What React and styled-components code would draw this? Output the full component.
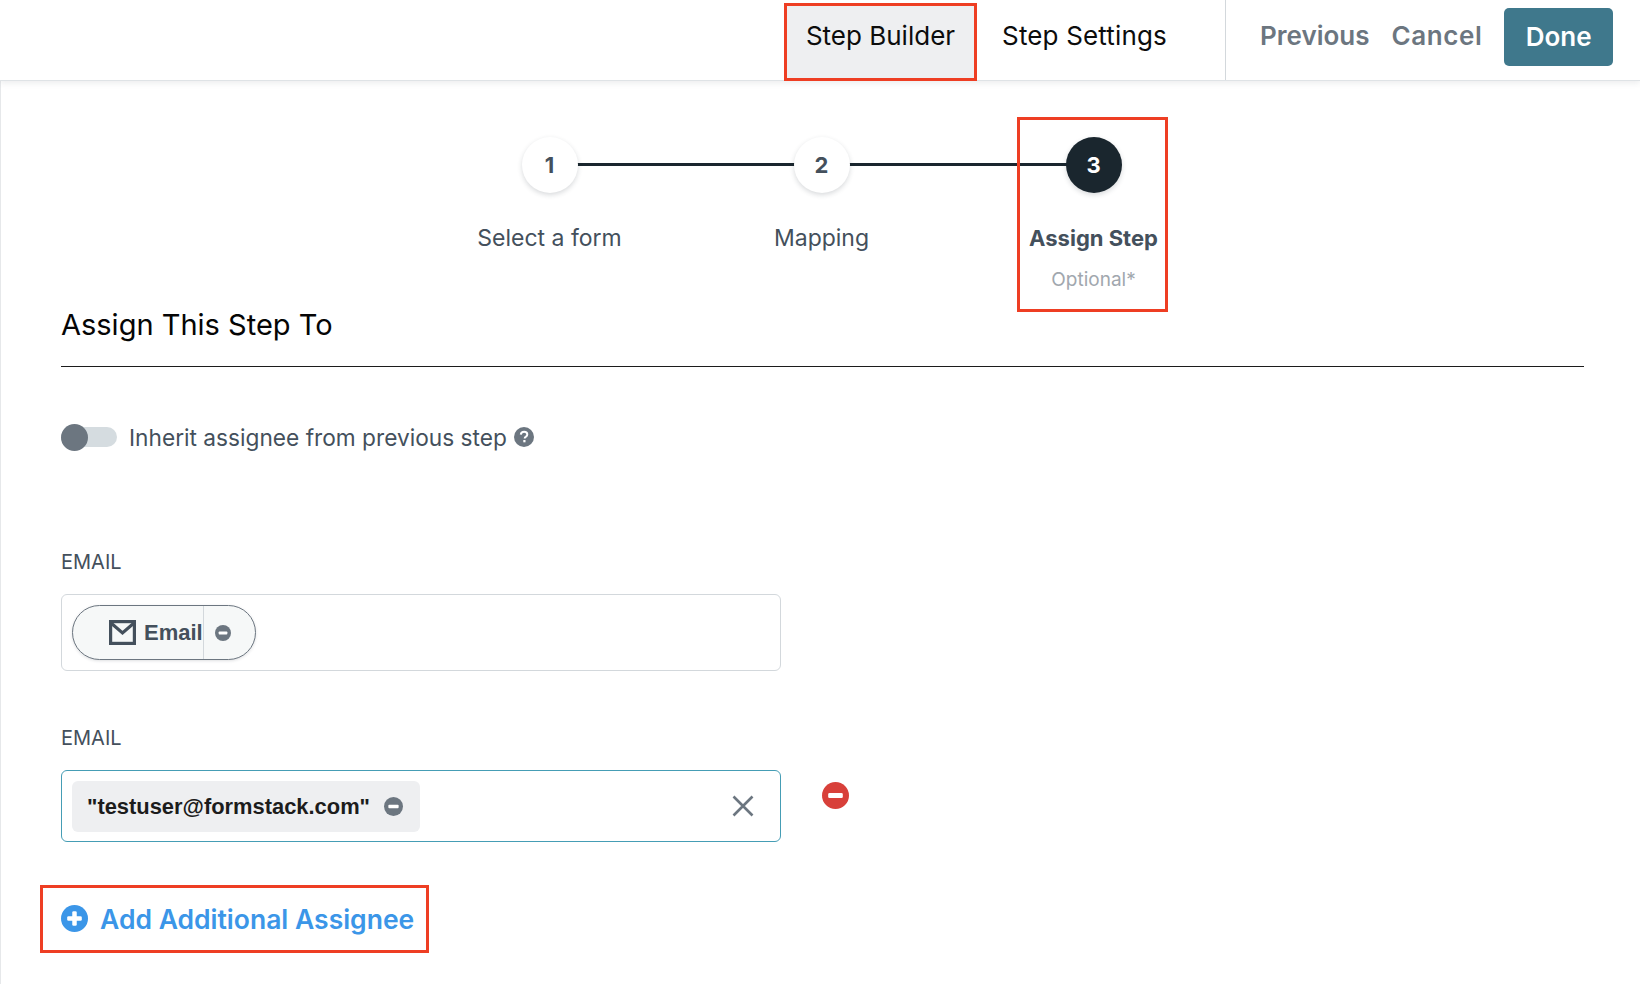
import styled, { createGlobalStyle } from "styled-components";

const GlobalStyle = createGlobalStyle`
  html, body {
    margin: 0;
    padding: 0;
    background: #fff;
  }
  body {
    font-family: "Inter", "Noto Sans", sans-serif;
    color: #44505c;
  }
  * {
    box-sizing: border-box;
  }
`;

const Page = styled.div`
  width: 1640px;
  height: 984px;
  overflow: hidden;
  display: flex;
  flex-direction: column;
`;
const Header = styled.header`
  height: 81px;
  flex: none;
  display: flex;
  justify-content: flex-end;
  align-items: stretch;
  padding-top: 3px;
  border-bottom: 1px solid #dfe3e6;
  box-shadow: 0 2px 6px rgba(60, 70, 80, 0.1);
  position: relative;
`;
const Tab = styled.div`
  height: 78px;
  display: flex;
  align-items: center;
  justify-content: center;
  padding-bottom: 14px;
  width: ${(p) => p.$width}px;
  font-size: 26px;
  letter-spacing: ${(p) => p.$spacing || 0}px;
  color: #0c0c0c;
  background: ${(p) => (p.$active ? "#eeeff1" : "transparent")};
  border: ${(p) => (p.$active ? "3px solid #ee3e23" : "none")};
`;
const Actions = styled.div`
  width: 415px;
  margin-top: -3px;
  margin-left: 33px;
  padding: 5px 27px 0 34px;
  border-left: 1px solid #d3d8dc;
  display: flex;
  align-items: flex-start;
`;
const TextAction = styled.div`
  height: 60px;
  display: flex;
  align-items: center;
  font-size: 26px;
  font-weight: 600;
  letter-spacing: ${(p) => p.$spacing || 0}px;
  color: #6c7680;
  margin-right: 22px;
`;
const DoneButton = styled.button`
  width: 109px;
  height: 58px;
  margin-top: 3px;
  margin-left: auto;
  padding-bottom: 3px;
  border: none;
  border-radius: 5px;
  background: #3f788c;
  color: #fff;
  font-family: inherit;
  font-size: 26px;
  font-weight: 600;
`;
const Main = styled.main`
  flex: 1;
  border-left: 1px solid #e6e8ea;
  padding: 36px 56px 0 60px;
`;
const Stepper = styled.div`
  display: flex;
  justify-content: center;
  margin-right: 2px;
  height: 195px;
`;
const Step = styled.div`
  position: relative;
  width: 272px;
  height: 195px;
  display: flex;
  flex-direction: column;
  align-items: center;
  padding-top: 20px;
`;
const Connector = styled.div`
  position: absolute;
  top: 46px;
  left: 136px;
  width: 272px;
  height: 3px;
  background: #1a262e;
`;
const Circle = styled.div`
  position: relative;
  width: 56px;
  height: 56px;
  border-radius: 50%;
  display: flex;
  align-items: center;
  justify-content: center;
  font-size: 22px;
  font-weight: 700;
  color: ${(p) => (p.$active ? "#fff" : "#44505c")};
  background: ${(p) => (p.$active ? "#1a262e" : "#fff")};
  box-shadow: 0 2px 5px rgba(40, 50, 60, 0.18);
`;
const StepLabel = styled.div`
  margin-top: 30px;
  height: 30px;
  line-height: 30px;
  font-size: ${(p) => (p.$active ? 22 : 23)}px;
  font-weight: ${(p) => (p.$active ? 700 : 400)};
  color: #44505c;
  white-space: nowrap;
`;
const StepNote = styled.div`
  margin-top: 15px;
  font-size: 19px;
  line-height: 24px;
  color: #a1a7ae;
`;
const Callout = styled.div`
  position: absolute;
  border: 3px solid #ee3e23;
  pointer-events: none;
  left: ${(p) => p.$left}px;
  top: ${(p) => p.$top}px;
  width: ${(p) => p.$width}px;
  height: ${(p) => p.$height}px;
`;
const SectionTitle = styled.h2`
  margin: 0;
  height: 55px;
  line-height: 26px;
  font-size: 29px;
  font-weight: 400;
  color: #050505;
  border-bottom: 1px solid #1c1c1c;
`;
const ToggleRow = styled.div`
  margin-top: 55px;
  height: 30px;
  display: flex;
  align-items: center;
`;
const Toggle = styled.div`
  position: relative;
  width: 56px;
  height: 20px;
  border-radius: 10px;
  background: #d5dce0;
`;
const Thumb = styled.div`
  position: absolute;
  left: 0;
  top: -3.5px;
  width: 27px;
  height: 27px;
  border-radius: 50%;
  background: #6c7680;
`;
const ToggleLabel = styled.span`
  margin-left: 12px;
  margin-right: 7px;
  font-size: 22.7px;
  color: #44505c;
`;
const FieldLabel = styled.div`
  margin-top: ${(p) => p.$top}px;
  height: 26px;
  line-height: 26px;
  font-size: 20px;
  color: #44505c;
`;
const FieldRow = styled.div`
  display: flex;
  align-items: flex-start;
  margin-top: ${(p) => p.$top}px;
`;
const Field = styled.div`
  width: 720px;
  height: ${(p) => p.$height}px;
  display: flex;
  align-items: flex-start;
  justify-content: space-between;
  padding: 10px 25px 0 10px;
  border: 1px solid ${(p) => (p.$focus ? "#459db5" : "#d3d8dc")};
  border-radius: 6px;
  background: #fff;
`;
const PillChip = styled.div`
  width: 184px;
  height: 55px;
  display: flex;
  align-items: center;
  padding-left: 36px;
  border: 1px solid #6c7680;
  border-radius: 28px;
  background: #f6f8f8;
  box-shadow: 0 1px 3px rgba(40, 50, 60, 0.15);
`;
const PillText = styled.span`
  margin-left: 8px;
  font-family: "Liberation Sans", Arial, sans-serif;
  font-size: 22px;
  font-weight: 700;
  color: #44505c;
  width: 59px;
`;
const PillAction = styled.div`
  height: 100%;
  display: flex;
  align-items: center;
  padding-left: 11px;
  border-left: 1px solid #d3d8dc;
`;
const TagChip = styled.div`
  height: 51px;
  display: flex;
  align-items: center;
  padding: 0 17px 0 15px;
  border-radius: 6px;
  background: #eeeff1;
`;
const TagText = styled.span`
  margin-right: 14px;
  font-family: "Liberation Sans", Arial, sans-serif;
  font-size: 21.9px;
  font-weight: 700;
  color: #1c1c1c;
`;
const ClearButton = styled.div`
  margin-top: 13px;
  height: 24px;
  display: flex;
`;
const RemoveButton = styled.div`
  margin-left: 41px;
  margin-top: 12px;
  height: 27px;
  display: flex;
`;
const AddRow = styled.div`
  position: relative;
  margin-top: 63px;
  height: 27px;
  display: flex;
  align-items: center;
  color: #3b96e8;
  font-size: 26.5px;
  font-weight: 600;
`;
const AddText = styled.span`
  margin-left: 12px;
`;

const MinusCircle = ({ size, color }) => (
  <svg width={size} height={size} viewBox="0 0 24 24">
    <circle cx="12" cy="12" r="12" fill={color} />
    <rect x="5.5" y="9.8" width="13" height="4.4" rx="1.2" fill="#fff" />
  </svg>
);

const PlusCircle = () => (
  <svg width="27" height="27" viewBox="0 0 24 24">
    <circle cx="12" cy="12" r="12" fill="#3b96e8" />
    <rect x="5.5" y="10" width="13" height="4" rx="1.2" fill="#fff" />
    <rect x="10" y="5.5" width="4" height="13" rx="1.2" fill="#fff" />
  </svg>
);

const HelpIcon = () => (
  <svg width="20" height="20" viewBox="0 0 20 20">
    <circle cx="10" cy="10" r="10" fill="#6c7680" />
    <path
      d="M6.8 7.6c.2-1.8 1.5-2.8 3.3-2.8 1.9 0 3.2 1.1 3.2 2.6 0 1.2-.7 1.9-1.6 2.5-.8.5-1 .8-1 1.6"
      fill="none"
      stroke="#fff"
      strokeWidth="2"
    />
    <rect x="9.3" y="13" width="2.2" height="2.3" fill="#fff" />
  </svg>
);

const MailIcon = () => (
  <svg width="27" height="25" viewBox="0 0 27 25">
    <rect x="1.6" y="1.6" width="23.8" height="21.8" fill="none" stroke="#44505c" strokeWidth="3.2" />
    <path d="M2 3l11.5 10L25 3" fill="none" stroke="#44505c" strokeWidth="3.2" />
  </svg>
);

const CloseIcon = () => (
  <svg width="24" height="24" viewBox="0 0 24 24">
    <path d="M2.5 2.5l19 19M21.5 2.5l-19 19" fill="none" stroke="#6c7680" strokeWidth="2.6" />
  </svg>
);

const App = () => {
  return (
    <Page>
      <GlobalStyle />
      <Header>
        <Tab $active $width={193}>Step Builder</Tab>
        <Tab $width={215} $spacing={0.15}>Step Settings</Tab>
        <Actions>
          <TextAction>Previous</TextAction>
          <TextAction $spacing={0.6}>Cancel</TextAction>
          <DoneButton>Done</DoneButton>
        </Actions>
      </Header>
      <Main>
        <Stepper>
          <Step>
            <Connector />
            <Circle>1</Circle>
            <StepLabel>Select a form</StepLabel>
          </Step>
          <Step>
            <Connector />
            <Circle>2</Circle>
            <StepLabel>Mapping</StepLabel>
          </Step>
          <Step>
            <Circle $active>3</Circle>
            <StepLabel $active>Assign Step</StepLabel>
            <StepNote>Optional*</StepNote>
            <Callout $left={59} $top={0} $width={151} $height={195} />
          </Step>
        </Stepper>
        <SectionTitle>Assign This Step To</SectionTitle>
        <ToggleRow>
          <Toggle>
            <Thumb />
          </Toggle>
          <ToggleLabel>Inherit assignee from previous step</ToggleLabel>
          <HelpIcon />
        </ToggleRow>
        <FieldLabel $top={97}>EMAIL</FieldLabel>
        <FieldRow $top={19}>
          <Field $height={77}>
            <PillChip>
              <MailIcon />
              <PillText>Email</PillText>
              <PillAction>
                <MinusCircle size={16} color="#6c7680" />
              </PillAction>
            </PillChip>
          </Field>
        </FieldRow>
        <FieldLabel $top={54}>EMAIL</FieldLabel>
        <FieldRow $top={19}>
          <Field $focus $height={72}>
            <TagChip>
              <TagText>"testuser@formstack.com"</TagText>
              <MinusCircle size={19} color="#6c7680" />
            </TagChip>
            <ClearButton>
              <CloseIcon />
            </ClearButton>
          </Field>
          <RemoveButton>
            <MinusCircle size={27} color="#d8403a" />
          </RemoveButton>
        </FieldRow>
        <AddRow>
          <PlusCircle />
          <AddText>Add Additional Assignee</AddText>
          <Callout $left={-21} $top={-20} $width={389} $height={68} />
        </AddRow>
      </Main>
    </Page>
  );
};

export default App;
